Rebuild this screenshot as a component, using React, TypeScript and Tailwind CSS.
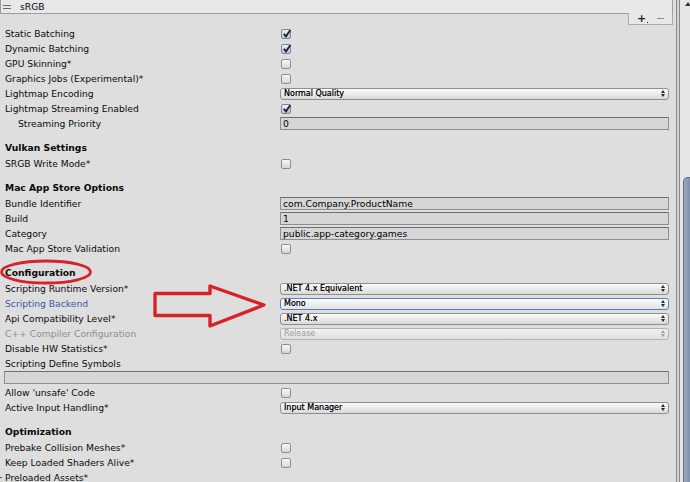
import React from "react";

const font = "font-['DejaVu_Sans',sans-serif]";

function Check({ checked = false }: { checked?: boolean }) {
  return (
    <div
      className={`relative ml-[1px] h-[10px] w-[10px] rounded-[2px] border ${
        checked
          ? "border-[#7d8594] bg-gradient-to-b from-[#eef1f6] to-[#bcc5d4]"
          : "border-[#8e8e8e] bg-gradient-to-b from-[#f8f8f8] to-[#d6d6d6]"
      }`}
    >
      {checked && (
        <svg className="absolute left-[0px] top-[-1px]" width="10" height="10" viewBox="0 0 10 10">
          <path d="M1.8 4.8 L4 7.4 L8.4 1" fill="none" stroke="#1c2640" strokeWidth="1.9" />
        </svg>
      )}
    </div>
  );
}

function Arrows({ color = "#222" }: { color?: string }) {
  return (
    <svg width="4" height="7" viewBox="0 0 4 7">
      <path d="M0 3 L2 0 L4 3 Z" fill={color} />
      <path d="M0 4 L2 7 L4 4 Z" fill={color} />
    </svg>
  );
}

function Dropdown({
  value,
  focused = false,
  disabled = false,
}: {
  value: string;
  focused?: boolean;
  disabled?: boolean;
}) {
  return (
    <div
      className={`flex h-[12px] items-center justify-between rounded-[3px] border pl-[3px] pr-[3px] ${
        focused
          ? "border-[#5f7fc4] bg-gradient-to-b from-[#fdfdfd] to-[#e2e2e2]"
          : disabled
          ? "border-[#b3b3b3] bg-gradient-to-b from-[#f2f2f2] to-[#dfdfdf]"
          : "border-[#8f8f8f] bg-gradient-to-b from-[#fbfbfb] to-[#d9d9d9]"
      }`}
    >
      <span
        className={`text-[8px] leading-none ${font} ${
          disabled ? "text-[#9a9a9a]" : "text-[#000] [text-shadow:0_0_0.3px_rgba(0,0,0,0.7)]"
        }`}
      >
        {value}
      </span>
      <Arrows color={disabled ? "#a0a0a0" : "#2a2a2a"} />
    </div>
  );
}

function Field({ value = "" }: { value?: string }) {
  return (
    <div className="flex h-[13px] items-center border border-[#8d8d8d] border-t-[#6e6e6e] bg-[#d6d6d6] pl-[2px]">
      <span className={`text-[9.2px] leading-none text-[#000] ${font}`}>{value}</span>
    </div>
  );
}

function Row({
  label,
  children,
  labelClass = "text-[#0a0a0a]",
  indent = false,
}: {
  label: string;
  children?: React.ReactNode;
  labelClass?: string;
  indent?: boolean;
}) {
  return (
    <div className="flex h-[15px] items-center">
      <div
        className={`w-[280px] whitespace-nowrap text-[9.2px] leading-none ${font} ${labelClass} ${
          indent ? "pl-[18px]" : "pl-[5px]"
        }`}
      >
        {label}
      </div>
      <div className="flex-1 pr-[7px]">{children}</div>
    </div>
  );
}

function Header({ title }: { title: string }) {
  return (
    <div className="mt-[9px] flex h-[16px] items-center pl-[5px]">
      <span className={`text-[9.2px] font-bold leading-none text-[#0a0a0a] ${font}`}>{title}</span>
    </div>
  );
}

export default function App() {
  return (
    <div className="relative flex h-[482px] w-[690px] overflow-hidden bg-[#dedede]">
      <div className="relative w-[676px] shrink-0">
        {/* list box top */}
        <div className="h-[26px]">
          <div className="mr-[3px] flex h-[14px] items-center border-x border-b border-[#9d9d9d] bg-[#e8e8e8]">
            <svg className="ml-[2px]" width="9" height="6" viewBox="0 0 9 6">
              <rect x="0" y="1" width="8" height="1" fill="#6a6a6a" />
              <rect x="0" y="4" width="8" height="1" fill="#6a6a6a" />
            </svg>
            <span className={`ml-[8px] text-[9.2px] leading-none text-[#0a0a0a] ${font}`}>sRGB</span>
          </div>
          <div className="flex justify-end pr-[3px]">
            <div className="-mt-[1px] flex h-[12px] w-[45px] items-center border-x border-b border-[#a9a9a9] bg-[#e8e8e8] pl-[8px]">
              <span className={`text-[11px] font-bold leading-none text-[#222] ${font}`}>+</span>
              <span className="ml-[1px] mt-[7px] h-[1px] w-[1px] bg-[#222]" />
              <span className="ml-[9px] h-[1px] w-[7px] bg-[#8a8a8a]" />
            </div>
          </div>
        </div>

        <Row label="Static Batching">
          <Check checked />
        </Row>
        <Row label="Dynamic Batching">
          <Check checked />
        </Row>
        <Row label="GPU Skinning*">
          <Check />
        </Row>
        <Row label="Graphics Jobs (Experimental)*">
          <Check />
        </Row>
        <Row label="Lightmap Encoding">
          <Dropdown value="Normal Quality" />
        </Row>
        <Row label="Lightmap Streaming Enabled">
          <Check checked />
        </Row>
        <Row label="Streaming Priority" indent>
          <Field value="0" />
        </Row>

        <Header title="Vulkan Settings" />
        <Row label="SRGB Write Mode*">
          <Check />
        </Row>

        <Header title="Mac App Store Options" />
        <Row label="Bundle Identifier">
          <Field value="com.Company.ProductName" />
        </Row>
        <Row label="Build">
          <Field value="1" />
        </Row>
        <Row label="Category">
          <Field value="public.app-category.games" />
        </Row>
        <Row label="Mac App Store Validation">
          <Check />
        </Row>

        <Header title="Configuration" />
        <Row label="Scripting Runtime Version*">
          <Dropdown value=".NET 4.x Equivalent" />
        </Row>
        <Row label="Scripting Backend" labelClass="text-[#3a56a8]">
          <Dropdown value="Mono" focused />
        </Row>
        <Row label="Api Compatibility Level*">
          <Dropdown value=".NET 4.x" />
        </Row>
        <Row label="C++ Compiler Configuration" labelClass="text-[#8e8e8e]">
          <Dropdown value="Release" disabled />
        </Row>
        <Row label="Disable HW Statistics*">
          <Check />
        </Row>
        <Row label="Scripting Define Symbols" />
        <div className="flex h-[14px] items-start pl-[4px] pr-[7px]">
          <div className="h-[13px] flex-1 border border-[#8d8d8d] border-t-[#6e6e6e] bg-[#d6d6d6]" />
        </div>
        <Row label="Allow 'unsafe' Code">
          <Check />
        </Row>
        <Row label="Active Input Handling*">
          <Dropdown value="Input Manager" />
        </Row>

        <Header title="Optimization" />
        <Row label="Prebake Collision Meshes*">
          <Check />
        </Row>
        <Row label="Keep Loaded Shaders Alive*">
          <Check />
        </Row>
        <div className="relative">
          <Row label="Preloaded Assets*" />
          <span className="absolute left-[0px] top-[7px] h-[1px] w-[2px] bg-[#555]" />
        </div>

        {/* annotations */}
        <svg
          className="pointer-events-none absolute left-0 top-0"
          width="676"
          height="482"
          viewBox="0 0 676 482"
        >
          <ellipse cx="46" cy="272" rx="44.5" ry="11" fill="none" stroke="#d8222a" strokeWidth="2.8" />
          <path
            d="M155 293.5 L210 293.5 L210 286 L264 305 L210 326 L210 315.5 L155 315.5 Z"
            fill="none"
            stroke="#d8222a"
            strokeWidth="3.4"
            strokeLinejoin="round"
          />
        </svg>
      </div>

      {/* divider */}
      <div className="h-full w-[4px] shrink-0 border-x border-[#8a8a8a] bg-[#d2d2d2]" />

      {/* scrollbar */}
      <div className="flex h-full flex-1 flex-col bg-[#e6e6e6] pl-[3px]">
        <div className="flex h-[8px] items-center pl-[2px]">
          <svg width="6" height="4" viewBox="0 0 6 4">
            <path d="M0 4 L3 0 L6 4 Z" fill="#333" />
          </svg>
        </div>
        <div className="mt-[169px] flex-1 rounded-tl-[5px] border-l border-t border-[#5d6d88] bg-gradient-to-r from-[#9aa8bf] to-[#7d8da8]" />
      </div>
    </div>
  );
}
